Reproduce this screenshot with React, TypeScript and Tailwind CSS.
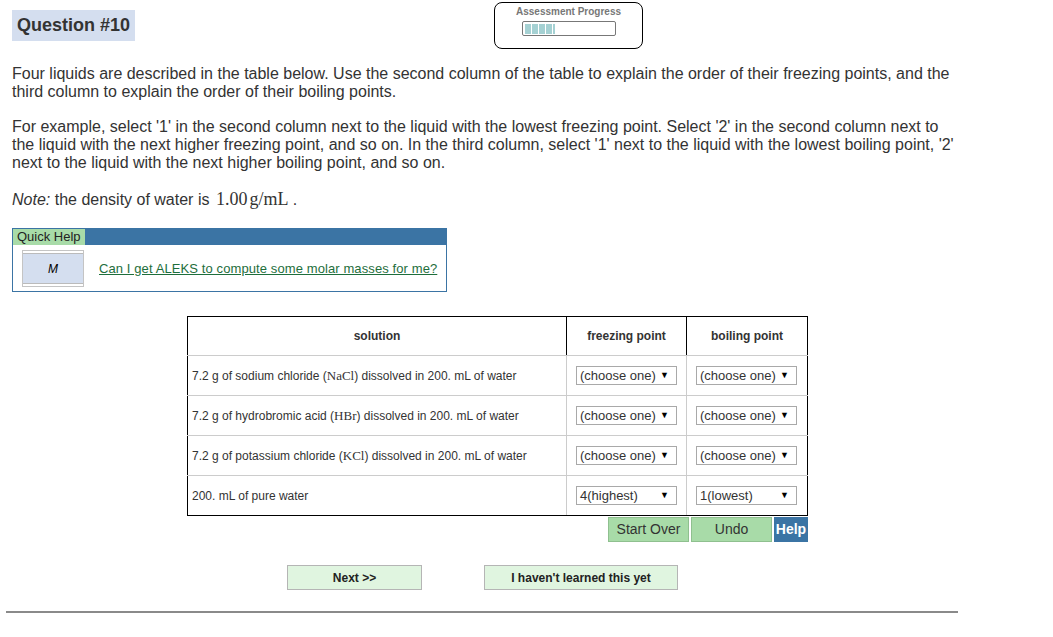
import React from "react";

const rows = [
    { pre: "7.2 g of sodium chloride (", f: "NaCl", post: ") dissolved in 200. mL of water", fp: "(choose one)", bp: "(choose one)" },
    { pre: "7.2 g of hydrobromic acid (", f: "HBr", post: ") dissolved in 200. mL of water", fp: "(choose one)", bp: "(choose one)" },
    { pre: "7.2 g of potassium chloride (", f: "KCl", post: ") dissolved in 200. mL of water", fp: "(choose one)", bp: "(choose one)" },
    { pre: "200. mL of pure water", f: "", post: "", fp: "4(highest)", bp: "1(lowest)" },
];

const Dropdown = ({ value }: { value: string }) => {
    return (
        <div className="h-[19px] w-[101px] border border-[#a9a9a9] bg-white flex items-center justify-between whitespace-nowrap pl-[3px] pr-[7px] text-[13px] text-[#333]">
            <span>{value}</span>
            <span className="text-[9px] text-black">▼</span>
        </div>
    );
};

export default function App() {
    return (
        <div className="w-[1053px] h-[637px] bg-white text-[#333] relative" style={{ fontFamily: "'Liberation Sans', Arial, sans-serif" }}>
            <div className="flex items-start">
                <div className="ml-[12px] mt-[10px] h-[31px] w-[123px] bg-[#d4deef] flex items-center pl-[5px] text-[18px] font-bold text-[#333]">Question #10</div>
                <div className="ml-[359px] mt-[2px] h-[47px] w-[149px] border border-black rounded-[8px] flex flex-col items-center">
                    <div className="mt-[3px] text-[10px] leading-[12px] font-bold text-[#777]">Assessment Progress</div>
                    <div className="mt-[3px] h-[15px] w-[94px] border border-[#777] rounded-[2px] flex items-center gap-[1px] pl-[2px]">
                        {[0, 1, 2, 3].map((i) => (
                            <div key={i} className="h-[10px] w-[6px] bg-[#a5d1d3]" />
                        ))}
                        <div className="h-[10px] w-[2px] bg-[#a5d1d3]" />
                    </div>
                </div>
            </div>

            <div className="ml-[12px] mt-[16px] w-[945px] text-[16px] leading-[18px] text-[#333]">
                <p>Four liquids are described in the table below. Use the second column of the table to explain the order of their freezing points, and the third column to explain the order of their boiling points.</p>
                <p className="mt-[17px]">For example, select '1' in the second column next to the liquid with the lowest freezing point. Select '2' in the second column next to the liquid with the next higher freezing point, and so on. In the third column, select '1' next to the liquid with the lowest boiling point, '2' next to the liquid with the next higher boiling point, and so on.</p>
                <p className="mt-[16px] leading-[22px]">
                    <i>Note:</i> the density of water is{" "}
                    <span className="text-[18px] ml-[2px]" style={{ fontFamily: "'Liberation Serif', 'Times New Roman', serif" }}>
                        1.00<span className="ml-[2px]">g/mL</span>
                    </span>{" "}
                    .
                </p>
            </div>

            <div className="ml-[12px] mt-[17px] w-[435px] h-[64px] border border-[#3b74a4]">
                <div className="h-[16px] bg-[#3b74a4] flex">
                    <div className="bg-[#a8dba8] px-[4px] text-[13px] leading-[16px] text-[#222]">Quick Help</div>
                </div>
                <div className="flex items-center mt-[5px]">
                    <div className="ml-[9px] h-[37px] w-[62px] bg-[#d4deef] border border-[#c4c4c4] shadow-[inset_0_2px_0_#fff,inset_0_-2px_0_#fff,inset_0_3px_0_#bbb,inset_0_-3px_0_#bbb] flex items-center justify-center text-[12px] italic text-black">M</div>
                    <span className="ml-[15px] text-[13px] tracking-[0.1px] text-[#1e6e3c] underline">Can I get ALEKS to compute some molar masses for me?</span>
                </div>
            </div>

            <div className="ml-[187px] mt-[24px] w-[621px]">
                <table className="w-[621px] border border-black border-collapse text-[12px] text-[#333]">
                    <thead>
                        <tr className="h-[39px]">
                            <th className="w-[379px] border border-black border-b-[#ccc] font-bold text-center">solution</th>
                            <th className="w-[120px] border border-black border-b-[#ccc] font-bold text-center">freezing point</th>
                            <th className="w-[121px] border border-black border-b-[#ccc] font-bold text-center">boiling point</th>
                        </tr>
                    </thead>
                    <tbody>
                        {rows.map((r, i) => {
                            const last = i === rows.length - 1 ? "border-b-black" : "";
                            return (
                                <tr key={i} className="h-[40px]">
                                    <td className={`border border-[#ccc] border-l-black pl-[4px] text-left ${last}`}>
                                        {r.pre}
                                        {r.f && (
                                            <span className="text-[13px]" style={{ fontFamily: "'Liberation Serif', 'Times New Roman', serif" }}>{r.f}</span>
                                        )}
                                        {r.post}
                                    </td>
                                    <td className={`border border-[#ccc] pl-[9px] ${last}`}>
                                        <Dropdown value={r.fp} />
                                    </td>
                                    <td className={`border border-[#ccc] border-r-black pl-[9px] ${last}`}>
                                        <Dropdown value={r.bp} />
                                    </td>
                                </tr>
                            );
                        })}
                    </tbody>
                </table>
                <div className="flex justify-end gap-[2px] mt-[1px] text-[14px]">
                    <div className="w-[81px] h-[25px] bg-[#a8dba8] border border-[#8fc08f] flex items-center justify-center text-[#333]">Start Over</div>
                    <div className="w-[81px] h-[25px] bg-[#a8dba8] border border-[#8fc08f] flex items-center justify-center text-[#333]">Undo</div>
                    <div className="w-[34px] h-[25px] bg-[#3b74a4] flex items-center justify-center text-white font-bold">Help</div>
                </div>
            </div>

            <div className="flex mt-[23px] text-[12px] font-bold text-[#222]">
                <div className="ml-[287px] w-[135px] h-[25px] bg-[#e0f5e0] border border-[#b5b5b5] flex items-center justify-center">Next &gt;&gt;</div>
                <div className="ml-[62px] w-[194px] h-[25px] bg-[#e0f5e0] border border-[#b5b5b5] flex items-center justify-center">I haven't learned this yet</div>
            </div>

            <div className="ml-[6px] mt-[21px] w-[952px] h-[2px] bg-[#8a8a8a]" />
        </div>
    );
}
